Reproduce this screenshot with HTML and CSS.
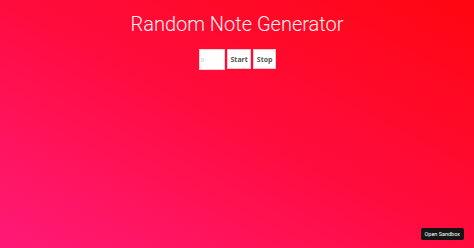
FILE: index.html
```html
<!DOCTYPE html>
<html lang="en">
<head>
    <meta charset="UTF-8">
    <meta name="viewport" content="width=device-width, initial-scale=1.0">
    <title>Random Note Generator</title>
    <link rel="stylesheet" href="styles.css">
</head>
<body>
    <div class="container">
        <h1>Random Note Generator</h1>

        <div class="controls">
            <input type="text" id="note" class="note-box" value="0">
            <button class="btn">Start</button>
            <button class="btn">Stop</button>
        </div>
    </div>

    <a class="sandbox" href="#">Open Sandbox</a>
</body>
</html>
```

FILE: styles.css
```css
html, body {
    height: 100%;
}
body {
    margin: 0;
    font-family: Roboto, "Noto Sans", sans-serif;
    background: linear-gradient(to top right, #ff1a78 0%, #ff0c3e 50%, #ff0610 100%);
    overflow: hidden;
}
.container {
    text-align: center;
    padding-top: 10px;
}
h1 {
    margin: 0;
    font-size: 20px;
    font-weight: 300;
    color: #fff0f2;
    line-height: 28px;
}
.controls {
    display: flex;
    justify-content: center;
    align-items: flex-start;
    gap: 2px;
    margin-top: 11px;
    padding-left: 1px;
}
.note-box {
    width: 26px;
    height: 21px;
    box-sizing: border-box;
    border: 1px solid #f4d0d6;
    background: #fff;
    padding: 0 0 0 1px;
    font-family: "Open Sans", sans-serif;
    font-size: 5px;
    color: #aaa;
    outline: none;
}
.btn {
    height: 20px;
    box-sizing: border-box;
    padding: 0 2.5px;
    background: #fff;
    border: 1px solid #f2c8d0;
    font-family: "Open Sans", sans-serif;
    font-weight: 700;
    font-size: 7px;
    color: #555;
    cursor: pointer;
}
.sandbox {
    position: absolute;
    right: 10px;
    bottom: 8px;
    background: #151515;
    color: #fff;
    font-family: Roboto, sans-serif;
    font-size: 5.5px;
    padding: 3px 4px;
    border-radius: 2px;
    text-decoration: none;
}
```
